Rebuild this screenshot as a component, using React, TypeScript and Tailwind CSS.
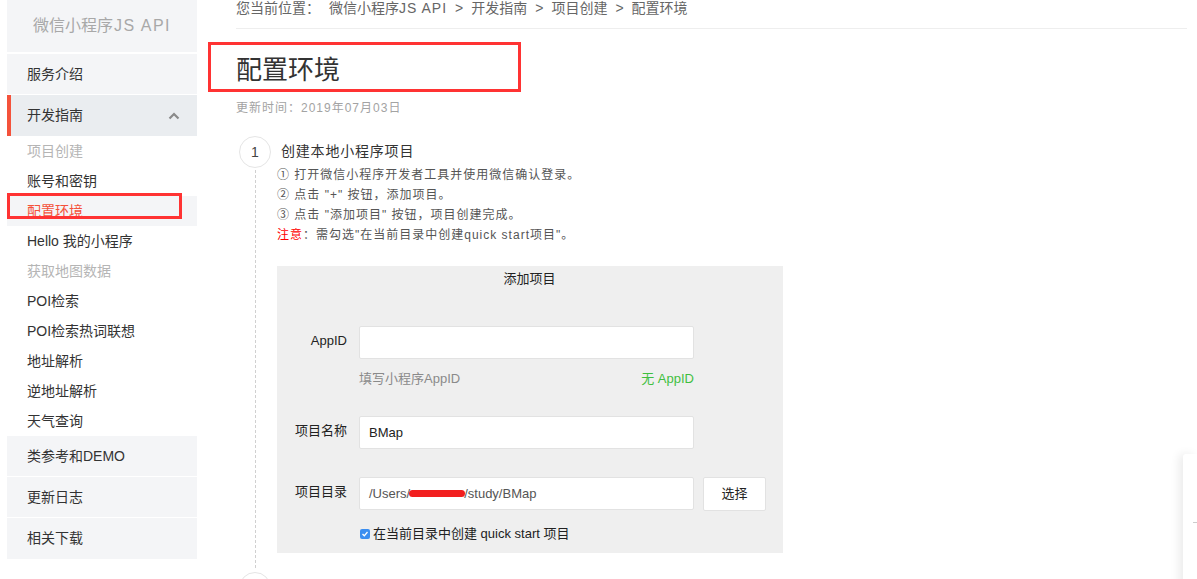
import React from 'react'

const FONT = '"Liberation Sans", "Noto Sans CJK SC", sans-serif'

const subItems: { label: string; tone: 'muted' | 'normal' | 'active' }[] = [
  { label: '项目创建', tone: 'muted' },
  { label: '账号和密钥', tone: 'normal' },
  { label: '配置环境', tone: 'active' },
  { label: 'Hello 我的小程序', tone: 'normal' },
  { label: '获取地图数据', tone: 'muted' },
  { label: 'POI检索', tone: 'normal' },
  { label: 'POI检索热词联想', tone: 'normal' },
  { label: '地址解析', tone: 'normal' },
  { label: '逆地址解析', tone: 'normal' },
  { label: '天气查询', tone: 'normal' },
]

const toneClass = {
  muted: 'text-[#b5b5b5]',
  normal: 'text-[#333]',
  active: 'text-[#f4523b] bg-[#f4f5f7]',
}

function Sidebar() {
  return (
    <aside className="w-[197px] shrink-0 pl-[7px]">
      <div className="bg-[#f4f5f7]">
        <div className="h-[54px] border-b-2 border-white flex items-center justify-center text-[16px] text-[#a8a8a8]">
          微信小程序<span className="tracking-[1.5px] ml-[1px]">JS API</span>
        </div>
        <div className="h-[41px] border-b border-white flex items-center pl-[20px] text-[14px] text-[#333]">
          服务介绍
        </div>
        <div className="h-[41px] flex items-center justify-between bg-[#eaedf0] border-l-4 border-[#f4523b] pl-[16px] pr-[17px] text-[14px] text-[#333]">
          开发指南
          <svg width="12" height="8" viewBox="0 0 12 8">
            <polyline points="1.5,6.5 6,2 10.5,6.5" fill="none" stroke="#8a8a8a" strokeWidth="2.2" />
          </svg>
        </div>
      </div>
      <ul className="bg-white">
        {subItems.map((it) => (
          <li
            key={it.label}
            className={`relative h-[30px] flex items-center pl-[20px] text-[14px] ${toneClass[it.tone]}`}
          >
            {it.label}
            {it.tone === 'active' && (
              <span className="absolute left-0 top-[-3px] w-[175px] h-[26px] border-[3px] border-[#f33]" />
            )}
          </li>
        ))}
      </ul>
      <div className="bg-[#f4f5f7]">
        {['类参考和DEMO', '更新日志', '相关下载'].map((t, i) => (
          <div
            key={t}
            className={`h-[41px] flex items-center pl-[20px] text-[14px] text-[#333] ${i < 2 ? 'border-b border-white' : ''}`}
          >
            {t}
          </div>
        ))}
      </div>
    </aside>
  )
}

function FormRow({ label, children }: { label: string; children: React.ReactNode }) {
  return (
    <div className="flex items-start">
      <div className="w-[70px] mr-[12px] pt-[5px] text-right text-[13px] text-[#222] leading-[20px]">{label}</div>
      {children}
    </div>
  )
}

function AddProjectShot() {
  return (
    <div className="w-[506px] h-[287px] bg-[#efefef] pt-[5px]">
      <div className="text-center text-[13px] leading-[16px] text-[#222] pr-[1px]">添加项目</div>
      <div className="mt-[39px]">
        <FormRow label="AppID">
          <div className="w-[335px] h-[33px] bg-white border border-[#e2e2e2] rounded-[2px]" />
        </FormRow>
        <div className="ml-[82px] w-[335px] mt-[12px] flex justify-between text-[13px] leading-[16px]">
          <span className="text-[#8a8a8a]">填写小程序AppID</span>
          <span className="text-[#3fbf3f]">无 AppID</span>
        </div>
        <div className="mt-[29px]">
          <FormRow label="项目名称">
            <div className="w-[335px] h-[33px] bg-white border border-[#e2e2e2] rounded-[2px] flex items-center pl-[9px] text-[13px] text-[#222]">
              BMap
            </div>
          </FormRow>
        </div>
        <div className="mt-[28px]">
          <FormRow label="项目目录">
            <div className="flex gap-[9px]">
              <div className="w-[335px] h-[33px] bg-white border border-[#e2e2e2] rounded-[2px] flex items-center pl-[9px] text-[13px] text-[#555]">
                /Users/
                <span className="inline-block w-[56px] h-[7px] rounded-full bg-[#f21f1f] -mx-[1px]" />
                /study/BMap
              </div>
              <div className="w-[63px] h-[34px] bg-white border border-[#e2e2e2] rounded-[2px] flex items-center justify-center text-[13px] text-[#222]">
                选择
              </div>
            </div>
          </FormRow>
        </div>
        <div className="ml-[83px] mt-[15px] flex items-center gap-[3px] text-[13px] leading-[16px] text-[#222]">
          <span className="w-[10px] h-[10px] rounded-[2px] bg-[#3b8ef0] flex items-center justify-center">
            <svg width="8" height="8" viewBox="0 0 8 8">
              <polyline points="1.5,4 3.3,5.8 6.5,2" fill="none" stroke="white" strokeWidth="1.3" />
            </svg>
          </span>
          在当前目录中创建 quick start 项目
        </div>
      </div>
    </div>
  )
}

function Sep() {
  return <span className="mx-[8px]">&gt;</span>
}

function Main() {
  return (
    <main className="ml-[39px] w-[951px] shrink-0">
      <div className="h-[29px] border-b border-[#eee] text-[14px] leading-[16px] text-[#666] whitespace-nowrap">
        您当前位置：<span className="ml-[9px]">微信小程序</span>
        <span className="tracking-[1px]">JS API</span>
        <Sep />开发指南<Sep />项目创建<Sep />配置环境
      </div>
      <div className="relative mt-[23px]">
        <h1 className="text-[26px] leading-[36px] text-[#333] font-normal">配置环境</h1>
        <span className="absolute left-[-28px] top-[-10px] w-[313px] h-[50px] border-[3px] border-[#f33]" />
      </div>
      <div className="mt-[10px] text-[12px] leading-[20px] text-[#a3a3a3] tracking-[1px]">更新时间：2019年07月03日</div>

      <div className="mt-[18px] flex">
        <div className="ml-[3px] w-[32px] flex flex-col items-center">
          <div className="w-[32px] h-[32px] rounded-full border border-[#e5e5e5] flex items-center justify-center text-[14px] text-[#444]">
            1
          </div>
          <div className="flex-1 mt-[2px] border-l border-dashed border-[#d0d0d0]" />
        </div>
        <div className="ml-[6px] pb-[15px]">
          <div className="mt-[1px] pl-[4px] text-[14px] leading-[28px] text-[#333] tracking-[0.8px]">创建本地小程序项目</div>
          <ol className="text-[12px] leading-[20px] text-[#555] tracking-[1px]">
            <li>① 打开微信小程序开发者工具并使用微信确认登录。</li>
            <li>② 点击 "+" 按钮，添加项目。</li>
            <li>③ 点击 "添加项目" 按钮，项目创建完成。</li>
            <li>
              <span className="text-[#f00]">注意</span>：需勾选"在当前目录中创建quick start项目"。
            </li>
          </ol>
          <div className="mt-[21px]">
            <AddProjectShot />
          </div>
        </div>
      </div>
      <div className="mt-[4px] flex">
        <div className="ml-[3px] w-[32px] h-[32px] rounded-full border border-[#e5e5e5]" />
      </div>
    </main>
  )
}

export default function App() {
  return (
    <div className="relative w-[1197px] h-[579px] overflow-hidden bg-white flex" style={{ fontFamily: FONT }}>
      <Sidebar />
      <Main />
      <div className="absolute right-0 top-[454px] w-[14px] h-[140px] bg-white rounded-tl-[3px] shadow-[-4px_0_10px_rgba(0,0,0,0.08)]">
        <span className="absolute left-[10px] top-[68px] w-[4px] h-px bg-[#ccc]" />
      </div>
    </div>
  )
}
